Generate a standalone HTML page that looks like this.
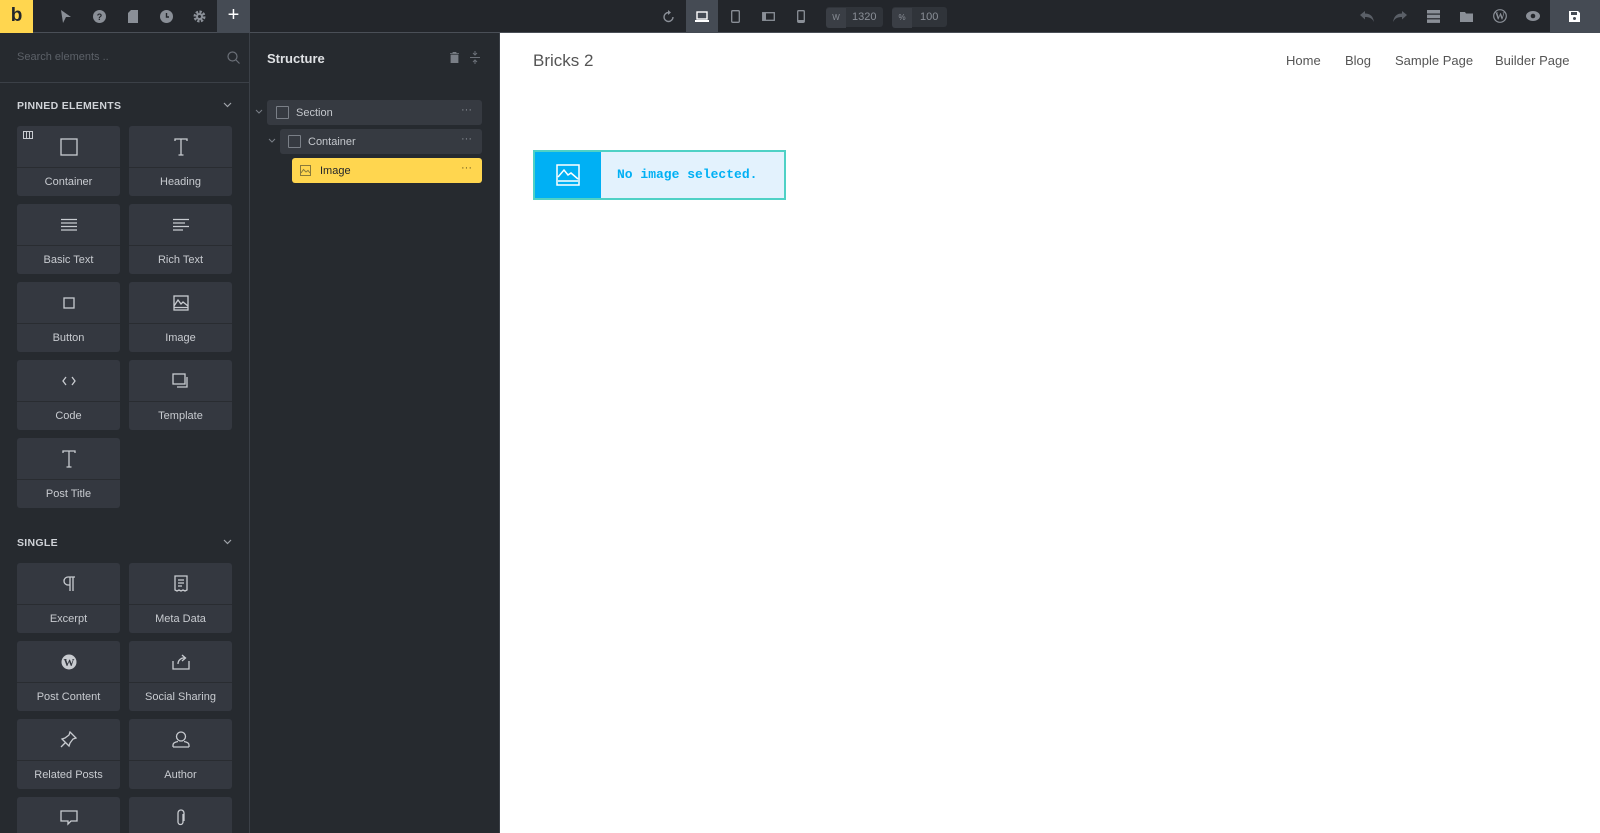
<!DOCTYPE html>
<html><head><meta charset="utf-8">
<style>
*{box-sizing:border-box;margin:0;padding:0}
html,body{width:1600px;height:833px;overflow:hidden}
body{background:#fff;font-family:"Liberation Sans",sans-serif}
#wrap{position:relative;width:1600px;height:833px;overflow:hidden}
.a{position:absolute}
#top{left:0;top:0;width:1600px;height:33px;background:#23262b;border-bottom:1px solid #4a4f57}
#left{left:0;top:33px;width:250px;height:800px;background:#262a2f;border-right:1px solid #3b4047}
#struct{left:250px;top:33px;width:250px;height:800px;background:#262a2f;border-right:1px solid #3b4047}
.card{position:absolute;width:103px;height:70px;background:#343840;border-radius:3px;overflow:hidden}
.card .ic{position:absolute;left:0;top:0;width:103px;height:42px;border-bottom:1px solid #292c31;display:flex;align-items:center;justify-content:center}
.card .lb{position:absolute;left:0;top:43px;width:103px;height:27px;line-height:27px;text-align:center;color:#c8cbd0;font-size:11px}
.card svg{stroke:#c8cbd0;fill:none;stroke-width:1.3}
.hd{color:#d0d3d8;font-size:10.5px;font-weight:bold;letter-spacing:.3px}
.row{position:absolute;height:25px;background:#363a41;border-radius:3px;color:#c4c7cc;font-size:11px;line-height:25px}
.tb svg{position:absolute;fill:#8a8f97}
.nav{position:absolute;top:53px;font-size:13px;color:#555}
</style></head><body><div id="wrap">
<div id="top" class="a tb">
 <div class="a" style="left:0;top:0;width:33px;height:33px;background:#ffd64f;color:#23262b;font-weight:bold;font-size:19px;text-align:center;line-height:32px">b</div>
 <svg style="left:60px;top:10px" width="12" height="13" viewBox="0 0 12 13"><path d="M1 0L11 7H6L3 13Z"/></svg>
 <svg style="left:93px;top:10px" width="13" height="13" viewBox="0 0 13 13"><circle cx="6.5" cy="6.5" r="6.5"/><text x="6.5" y="10" font-size="9" text-anchor="middle" fill="#23262b" font-weight="bold" font-family="Liberation Sans">?</text></svg>
 <svg style="left:128px;top:10px" width="10" height="13" viewBox="0 0 10 13"><path d="M3 0H10V13H0V3Z"/></svg>
 <svg style="left:160px;top:10px" width="13" height="13" viewBox="0 0 13 13"><circle cx="6.5" cy="6.5" r="6.5"/><path d="M6.5 3V7H9" stroke="#23262b" stroke-width="1.4" fill="none"/></svg>
 <svg style="left:193px;top:10px" width="13" height="13" viewBox="0 0 13 13"><circle cx="6.5" cy="6.5" r="4.5" stroke="#8a8f97" stroke-width="3" stroke-dasharray="2.2 1.3" fill="none"/><circle cx="6.5" cy="6.5" r="3.5"/><circle cx="6.5" cy="6.5" r="1.5" fill="#23262b"/></svg>
 <div class="a" style="left:217px;top:0;width:33px;height:33px;background:#454b54;color:#fff;font-size:20px;text-align:center;line-height:31px">+</div>
 <svg style="left:663px;top:10px" width="11" height="13" viewBox="0 0 11 13"><path d="M5.5 2.5A4.5 4.5 0 1 0 10 7" stroke="#8a8f97" stroke-width="1.4" fill="none"/><path d="M5 0L8 2.5L5 5Z"/></svg>
 <div class="a" style="left:686px;top:0;width:32px;height:33px;background:#454b54"></div>
 <svg style="left:695px;top:11px" width="14" height="11" viewBox="0 0 14 11"><rect x="2" y="1" width="10" height="7" stroke="#fff" stroke-width="1.4" fill="none"/><rect x="0" y="9" width="14" height="2" fill="#fff"/></svg>
 <svg style="left:731px;top:10px" width="9" height="13" viewBox="0 0 9 13"><rect x=".7" y=".7" width="7.6" height="11.6" rx="1" stroke="#8a8f97" stroke-width="1.3" fill="none"/></svg>
 <svg style="left:762px;top:12px" width="13" height="9" viewBox="0 0 13 9"><rect x=".7" y=".7" width="11.6" height="7.6" stroke="#8a8f97" stroke-width="1.3" fill="none"/><rect x="1" y="1" width="3" height="7"/></svg>
 <svg style="left:797px;top:10px" width="8" height="13" viewBox="0 0 8 13"><rect x=".7" y=".7" width="6.6" height="11.6" rx="1" stroke="#8a8f97" stroke-width="1.3" fill="none"/><rect x="1" y="10" width="6" height="2"/></svg>
 <div class="a" style="left:826px;top:7px;width:57px;height:20px;background:#30343a;border-radius:3px;font-size:11px;color:#8a8f97;line-height:20px"><span style="display:inline-block;width:20px;text-align:center;background:#3a3e45;font-size:8px;border-radius:3px 0 0 3px">W</span><span style="padding-left:6px">1320</span></div>
 <div class="a" style="left:892px;top:7px;width:55px;height:20px;background:#30343a;border-radius:3px;font-size:11px;color:#8a8f97;line-height:20px"><span style="display:inline-block;width:20px;text-align:center;background:#3a3e45;font-size:8px;border-radius:3px 0 0 3px">%</span><span style="padding-left:8px">100</span></div>
 <svg style="left:1360px;top:11px" width="14" height="11" viewBox="0 0 14 11"><path d="M0 4L5 0V2.5C10 2.5 13 5 14 11C12 7 9 6 5 6V8.5Z" fill="#5a5f67"/></svg>
 <svg style="left:1393px;top:11px" width="14" height="11" viewBox="0 0 14 11"><path d="M14 4L9 0V2.5C4 2.5 1 5 0 11C2 7 5 6 9 6V8.5Z" fill="#5a5f67"/></svg>
 <svg style="left:1427px;top:10px" width="13" height="13" viewBox="0 0 13 13"><rect y="0" width="13" height="3.5"/><rect y="4.7" width="13" height="3.5"/><rect y="9.4" width="13" height="3.5"/></svg>
 <svg style="left:1460px;top:11px" width="13" height="11" viewBox="0 0 13 11"><path d="M0 1H5L6 2.5H13V11H0Z"/></svg>
 <svg style="left:1493px;top:9px" width="14" height="14" viewBox="0 0 14 14"><circle cx="7" cy="7" r="6.3" stroke="#8a8f97" stroke-width="1.2" fill="none"/><text x="7" y="10.5" font-size="10" text-anchor="middle" fill="#8a8f97" font-family="Liberation Serif" font-weight="bold">W</text></svg>
 <svg style="left:1526px;top:11px" width="14" height="10" viewBox="0 0 14 10"><ellipse cx="7" cy="5" rx="7" ry="5"/><circle cx="7" cy="5" r="2.3" fill="#23262b"/></svg>
 <div class="a" style="left:1550px;top:0;width:50px;height:33px;background:#454b54"></div>
 <svg style="left:1569px;top:11px;fill:#fff" width="11" height="11" viewBox="0 0 11 11"><path d="M0 0H9L11 2V11H0Z"/><rect x="2" y="1" width="6" height="3" fill="#454b54"/><circle cx="5.5" cy="7.5" r="1.5" fill="#454b54"/></svg>
</div>

<div id="left" class="a">
 <div class="a" style="left:0;top:0;width:250px;height:50px;border-bottom:1px solid #3b4047"></div>
 <div class="a" style="left:17px;top:18px;font-size:11px;color:#5c6168">Search elements ..</div>
 <svg class="a" style="left:227px;top:18px" width="13" height="13" viewBox="0 0 13 13"><circle cx="5.5" cy="5.5" r="4.5" stroke="#6b7078" stroke-width="1.2" fill="none"/><path d="M9 9L12.5 12.5" stroke="#6b7078" stroke-width="1.2"/></svg>
 <div class="a hd" style="left:17px;top:67px">PINNED ELEMENTS</div>
 <svg class="a" style="left:223px;top:69px" width="9" height="6" viewBox="0 0 9 6"><path d="M1 1L4.5 4.5L8 1" stroke="#a0a4aa" stroke-width="1.2" fill="none"/></svg>
 <div class="a hd" style="left:17px;top:504px">SINGLE</div>
 <svg class="a" style="left:223px;top:506px" width="9" height="6" viewBox="0 0 9 6"><path d="M1 1L4.5 4.5L8 1" stroke="#a0a4aa" stroke-width="1.2" fill="none"/></svg>
</div>
<div class="card" style="left:17px;top:126px"><svg class="a" style="left:6px;top:5px" width="10" height="8" viewBox="0 0 10 8"><rect x=".5" y=".5" width="9" height="7" stroke-width="1"/><path d="M3.5 .5V7.5M6.5 .5V7.5" stroke-width="1"/></svg><div class="ic"><svg width="18" height="18"><rect x="1" y="1" width="16" height="16"/></svg></div><div class="lb">Container</div></div>
<div class="card" style="left:129px;top:126px"><div class="ic"><svg width="14" height="18"><path d="M1 3V1H13V3M7 1V17M4.5 17H9.5"/></svg></div><div class="lb">Heading</div></div>
<div class="card" style="left:17px;top:204px"><div class="ic"><svg width="18" height="14"><path d="M1 1.5H17M1 5H17M1 8.5H17M1 12H17"/></svg></div><div class="lb">Basic Text</div></div>
<div class="card" style="left:129px;top:204px"><div class="ic"><svg width="18" height="14"><path d="M1 1.5H17M1 5H13M1 8.5H17M1 12H11"/></svg></div><div class="lb">Rich Text</div></div>
<div class="card" style="left:17px;top:282px"><div class="ic"><svg width="12" height="12"><rect x="1" y="1" width="10" height="10"/></svg></div><div class="lb">Button</div></div>
<div class="card" style="left:129px;top:282px"><div class="ic"><svg width="16" height="16"><rect x="1" y="1" width="14" height="14"/><path d="M1 11L5 5L8 9L10 7L15 11M1 12.5H15"/></svg></div><div class="lb">Image</div></div>
<div class="card" style="left:17px;top:360px"><div class="ic"><svg width="14" height="10"><path d="M4 1L1 5L4 9M10 1L13 5L10 9"/></svg></div><div class="lb">Code</div></div>
<div class="card" style="left:129px;top:360px"><div class="ic"><svg width="18" height="16"><rect x="1" y="1" width="12" height="10"/><path d="M15 4V14H5"/></svg></div><div class="lb">Template</div></div>
<div class="card" style="left:17px;top:438px"><div class="ic"><svg width="14" height="18"><path d="M1 3V1H13V3M7 1V17M4.5 17H9.5"/></svg></div><div class="lb">Post Title</div></div>
<div class="card" style="left:17px;top:563px"><div class="ic"><svg width="14" height="16"><path d="M8 1V15M11 1V15M13 1H6A4 4 0 0 0 6 9H8"/></svg></div><div class="lb">Excerpt</div></div>
<div class="card" style="left:129px;top:563px"><div class="ic"><svg width="14" height="17"><path d="M1 1H13V15L11 16L9 15L7 16L5 15L3 16L1 15Z M4 5H10M4 8H10M4 11H8"/></svg></div><div class="lb">Meta Data</div></div>
<div class="card" style="left:17px;top:641px"><div class="ic"><svg width="16" height="16"><circle cx="8" cy="8" r="7.5" fill="#c8cbd0" stroke="none"/><text x="8" y="12" font-size="11" text-anchor="middle" fill="#343840" stroke="none" font-weight="bold" font-family="Liberation Serif">W</text></svg></div><div class="lb">Post Content</div></div>
<div class="card" style="left:129px;top:641px"><div class="ic"><svg width="18" height="17"><path d="M1 8V16H17V8M6 11A6 6 0 0 1 13 5M10 2L13.5 5L10 8"/></svg></div><div class="lb">Social Sharing</div></div>
<div class="card" style="left:17px;top:719px"><div class="ic"><svg width="17" height="17"><path d="M10 1L16 7L13 8L10 12L9 15L2 8L5 7L9 4Z M5.5 11.5L1 16"/></svg></div><div class="lb">Related Posts</div></div>
<div class="card" style="left:129px;top:719px"><div class="ic"><svg width="18" height="17"><circle cx="9" cy="5.5" r="4.5"/><path d="M1 16V14C1 12 3 11 6 10.5M17 16V14C17 12 15 11 12 10.5M1 16H17"/></svg></div><div class="lb">Author</div></div>
<div class="card" style="left:17px;top:797px"><div class="ic"><svg width="18" height="16"><path d="M1 1H17V11H11L8 14V11H1Z"/></svg></div></div>
<div class="card" style="left:129px;top:797px"><div class="ic"><svg width="10" height="17"><path d="M7 5V13A2.5 2.5 0 0 1 2 13V4A3 3 0 0 1 8 4V12"/></svg></div></div>

<div id="struct" class="a">
 <div class="a" style="left:17px;top:18px;font-size:13px;font-weight:bold;color:#dfe1e4">Structure</div>
 <svg class="a" style="left:200px;top:19px" width="9" height="11" viewBox="0 0 9 11"><path d="M0 1.5H9M3 1.5V0H6V1.5M1 3H8V11H1Z" fill="#7a7f87" stroke="#7a7f87" stroke-width=".8"/></svg>
 <svg class="a" style="left:220px;top:18px" width="10" height="13" viewBox="0 0 10 13"><path d="M0 6.5H10M5 0V4M5 9V13M3 2L5 4L7 2M3 11L5 9L7 11" stroke="#6b7078" stroke-width="1" fill="none"/></svg>
</div>
<svg class="a" style="left:255px;top:109px" width="8" height="6"><path d="M1 1L4 4L7 1" stroke="#7a7f87" fill="none"/></svg>
<div class="row" style="left:267px;top:100px;width:215px"><span class="a" style="left:9px;top:6px;width:13px;height:13px;border:1px solid #7a7f87;border-radius:1px"></span><span class="a" style="left:29px;top:1px">Section</span><span class="a" style="right:10px;top:-2px;color:#8a8f97">···</span></div>
<svg class="a" style="left:268px;top:138px" width="8" height="6"><path d="M1 1L4 4L7 1" stroke="#7a7f87" fill="none"/></svg>
<div class="row" style="left:280px;top:129px;width:202px"><span class="a" style="left:8px;top:6px;width:13px;height:13px;border:1px solid #7a7f87;border-radius:1px"></span><span class="a" style="left:28px;top:1px">Container</span><span class="a" style="right:10px;top:-2px;color:#8a8f97">···</span></div>
<div class="row" style="left:292px;top:158px;width:190px;background:#ffd64f;color:#23262b"><svg class="a" style="left:8px;top:7px" width="11" height="11"><rect x=".5" y=".5" width="10" height="10" fill="none" stroke="#8a7a3a"/><path d="M1 8L3.5 4.5L6 7L8 5.5L10 8" fill="none" stroke="#8a7a3a"/></svg><span class="a" style="left:28px;top:1px">Image</span><span class="a" style="right:10px;top:-2px;color:#6a5a20">···</span></div>

<div class="a" style="left:533px;top:51px;font-size:17px;color:#555">Bricks 2</div>
<div class="nav" style="left:1286px">Home</div>
<div class="nav" style="left:1345px">Blog</div>
<div class="nav" style="left:1395px">Sample Page</div>
<div class="nav" style="left:1495px">Builder Page</div>
<div class="a" style="left:533px;top:150px;width:253px;height:50px;border:2px solid #4fd1c5;background:#e3f2fd">
 <div class="a" style="left:0;top:0;width:66px;height:46px;background:#00b0f4"></div>
 <svg class="a" style="left:21px;top:12px" width="24" height="22" viewBox="0 0 24 22"><rect x="1" y="1" width="22" height="20" fill="none" stroke="#fff" stroke-width="1.5"/><path d="M2 13L8 6L12 11L15 9L22 15M2 17H22" fill="none" stroke="#fff" stroke-width="1.5"/></svg>
 <div class="a" style="left:82px;top:15px;font-family:'Liberation Mono',monospace;font-weight:bold;font-size:13px;color:#00b0f4">No image selected.</div>
</div>
</div></body></html>
